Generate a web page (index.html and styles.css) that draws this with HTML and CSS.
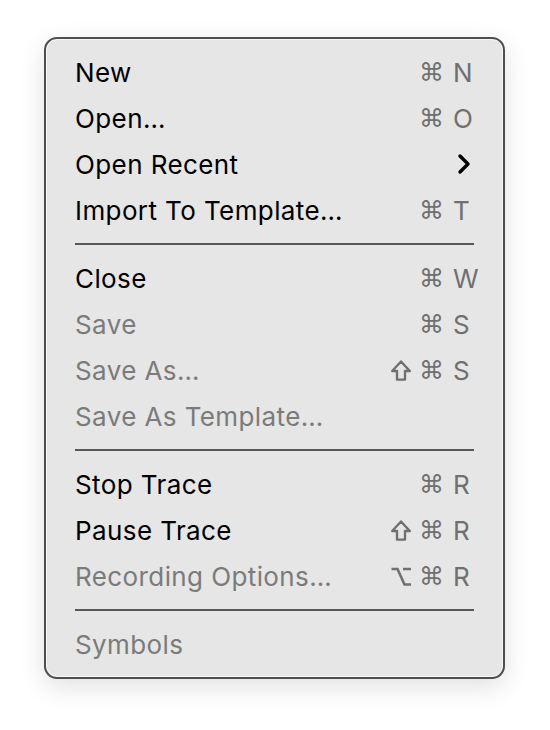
FILE: index.html
```html
<!DOCTYPE html>
<html>
<head>
<meta charset="utf-8">
<link rel="stylesheet" href="styles.css">
</head>
<body>
<div class="menu">
  <div class="item"><span class="label">New</span><span class="sc"><span class="cmd">⌘</span><span class="key">N</span></span></div>
  <div class="item"><span class="label">Open…</span><span class="sc"><span class="cmd">⌘</span><span class="key">O</span></span></div>
  <div class="item"><span class="label">Open Recent</span><span class="sc"><svg class="chev" width="14" height="22" viewBox="0 0 14 22"><path d="M3 3 L11 11 L3 19" fill="none" stroke="#000" stroke-width="3.4" stroke-linecap="round" stroke-linejoin="round"/></svg></span></div>
  <div class="item"><span class="label">Import To Template…</span><span class="sc"><span class="cmd">⌘</span><span class="key">T</span></span></div>
  <div class="sep"></div>
  <div class="item"><span class="label">Close</span><span class="sc"><span class="cmd">⌘</span><span class="key">W</span></span></div>
  <div class="item disabled"><span class="label">Save</span><span class="sc"><span class="cmd">⌘</span><span class="key">S</span></span></div>
  <div class="item disabled"><span class="label">Save As…</span><span class="sc"><svg class="mod" width="20" height="21" viewBox="0 0 20 21"><path d="M10 1.5 L18.8 11 H14 V19.6 H6 V11 H1.2 Z" fill="none" stroke="currentColor" stroke-width="2.4" stroke-linejoin="round"/></svg><span class="cmd">⌘</span><span class="key">S</span></span></div>
  <div class="item disabled"><span class="label">Save As Template…</span></div>
  <div class="sep"></div>
  <div class="item"><span class="label">Stop Trace</span><span class="sc"><span class="cmd">⌘</span><span class="key">R</span></span></div>
  <div class="item"><span class="label">Pause Trace</span><span class="sc"><svg class="mod" width="20" height="21" viewBox="0 0 20 21"><path d="M10 1.5 L18.8 11 H14 V19.6 H6 V11 H1.2 Z" fill="none" stroke="currentColor" stroke-width="2.4" stroke-linejoin="round"/></svg><span class="cmd">⌘</span><span class="key">R</span></span></div>
  <div class="item disabled"><span class="label">Recording Options…</span><span class="sc"><svg class="mod" width="20" height="21" viewBox="0 0 20 21"><path d="M0.5 3 H6.5 L13.5 18.5 H20 M12 3 H20" fill="none" stroke="currentColor" stroke-width="2.6"/></svg><span class="cmd">⌘</span><span class="key">R</span></span></div>
  <div class="sep"></div>
  <div class="item disabled"><span class="label">Symbols</span></div>
</div>
</body>
</html>
```
FILE: styles.css
```css
html, body {
  margin: 0;
  padding: 0;
  background: #ffffff;
  min-height: 100vh;
}
body {
  padding: 37px 0 0 44px;
  box-sizing: border-box;
  font-family: Inter, "Liberation Sans", sans-serif;
}
.menu {
  width: 457px;
  box-sizing: content-box;
  background: #e6e6e6;
  border: 2px solid #4e4e4e;
  border-radius: 13px;
  padding: 10px 0;
  box-shadow: inset 0 0 0 1px #f6f6f6, 0 8px 26px rgba(0, 0, 0, 0.12);
}
.item {
  height: 46px;
  display: flex;
  align-items: center;
  justify-content: space-between;
  padding: 0 30px 0 29px;
  font-size: 26px;
  letter-spacing: 0.4px;
  color: #000;
}
.item.disabled {
  color: #7b7b7b;
}
.sc {
  display: flex;
  align-items: center;
  color: #707070;
}
.mod {
  display: block;
  flex-shrink: 0;
  margin-right: 8px;
}
.cmd {
  font-family: "DejaVu Sans", sans-serif;
  font-size: 25px;
  letter-spacing: 0;
  line-height: 1;
}
.key {
  width: 20px;
  margin-left: 9px;
  text-align: left;
  letter-spacing: 0;
}
.chev {
  display: block;
  margin-right: 2px;
}
.sep {
  height: 22px;
  display: flex;
  align-items: center;
  padding: 0 29px 0 29px;
}
.sep::before {
  content: "";
  display: block;
  flex: 1;
  height: 2px;
  background: #575757;
}
```
